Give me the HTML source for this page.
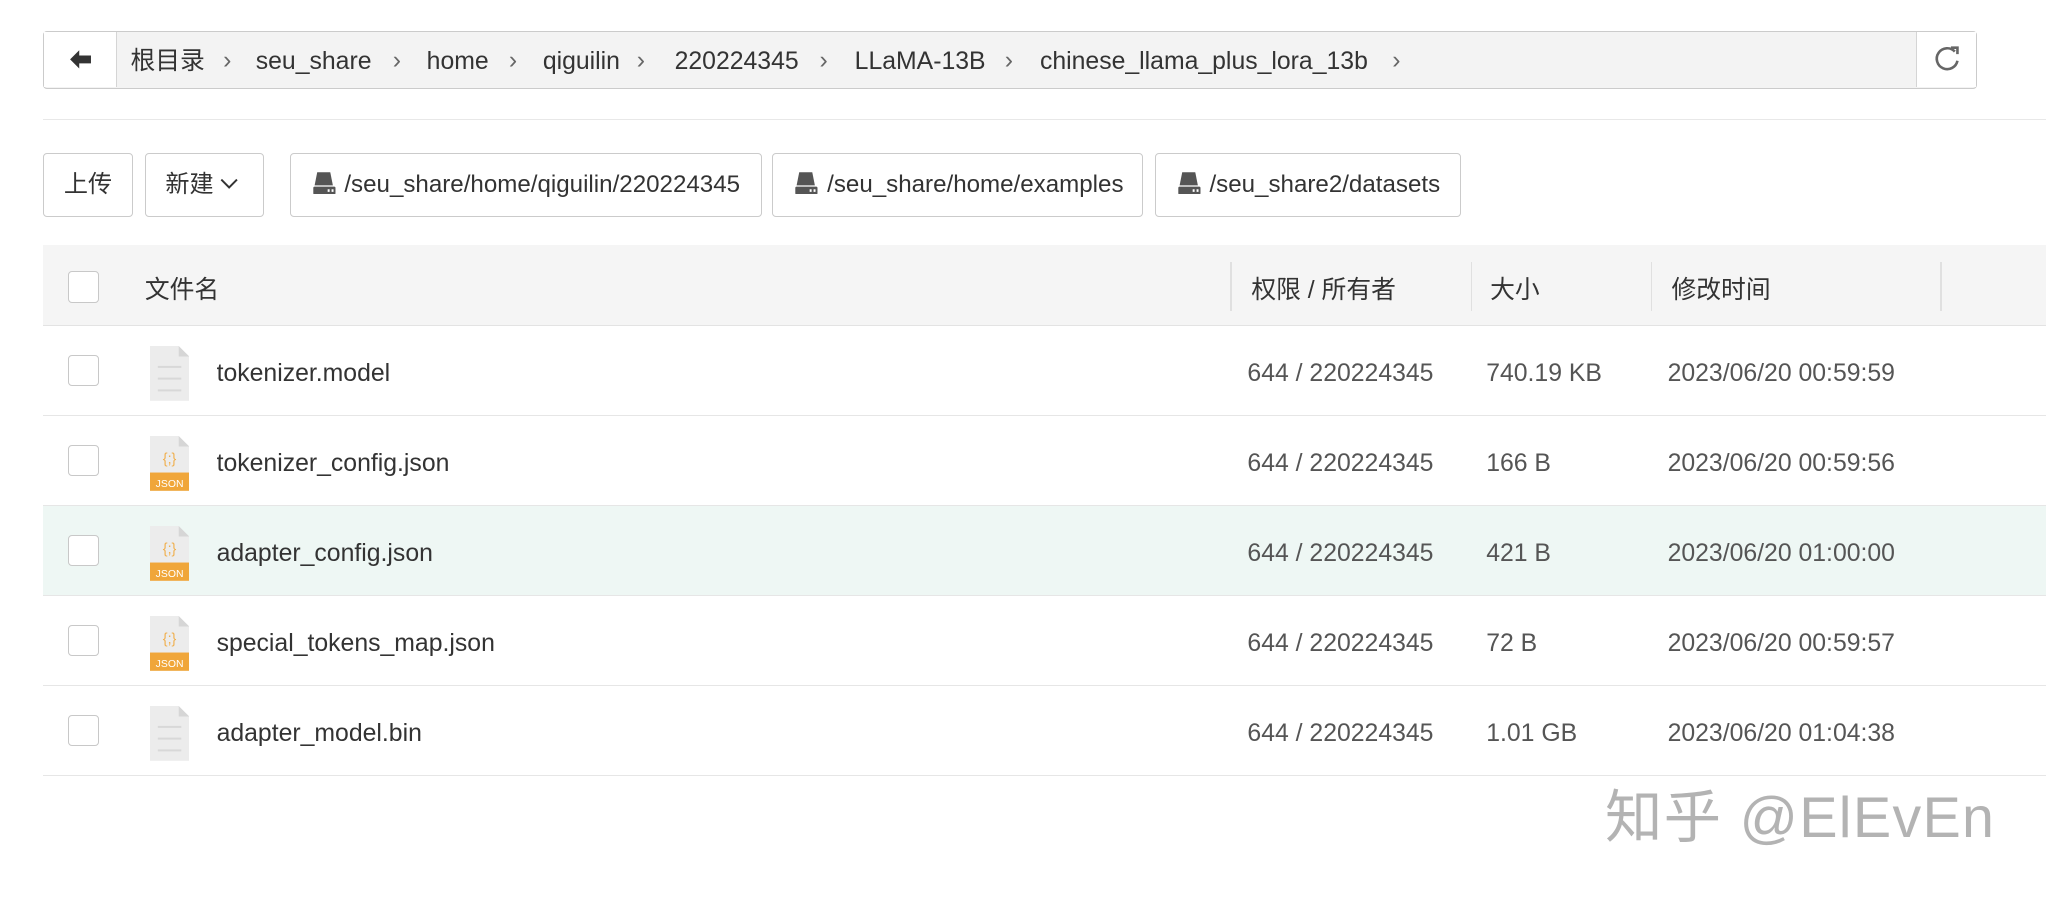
<!DOCTYPE html>
<html><head><meta charset="utf-8"><style>
*{margin:0;padding:0;box-sizing:border-box}
html,body{width:2046px;height:898px;overflow:hidden;background:#fff}
#w{zoom:1.30485;position:relative;width:1568px;height:688px;font-family:"Liberation Sans","Noto Sans CJK SC",sans-serif;color:#333;font-size:19px}
.a{position:absolute;white-space:nowrap;line-height:22px}
.bc{position:absolute;left:33px;top:24px;width:1482px;height:44px;background:#f3f3f3;border:1px solid #cbcbcb;border-radius:3px}
.btn{position:absolute;top:117px;height:49px;border:1px solid #cbcbcb;border-radius:3px;background:#fff;line-height:47px;font-size:18.5px;white-space:nowrap}
.hd{position:absolute;left:33px;top:188px;width:1535px;height:62px;background:#f5f5f5;border-bottom:1px solid #e3e3e3}
.vs{position:absolute;top:13px;width:1px;height:37px;background:#e0e0e0}
.row{position:absolute;left:33px;width:1535px;height:69px;border-bottom:1px solid #e6e6e6}
.cb{position:absolute;left:19px;top:22px;width:24px;height:24px;border:1px solid #c8c8c8;border-radius:3px;background:#fff}
.row .t{position:absolute;top:2px;line-height:69px;white-space:nowrap}
.sep{color:#666}
.g{color:#555}
</style></head><body><div id="w">
<div class="bc">
 <div class="a" style="left:0;top:0;width:56px;height:42px;background:#fff;border-right:1px solid #d5d5d5">
  <svg width="56" height="42" viewBox="0 0 56 42"><path d="M20 21 L27 14 L27 18 L36 18 L36 24 L27 24 L27 28 Z" fill="#333"/></svg></div>
 <div class="a" style="right:0;top:0;width:46px;height:42px;background:#fff;border-left:1px solid #d5d5d5">
  <svg width="46" height="42" viewBox="0 0 46 42"><path d="M29 15 A8 8 0 1 0 31 22" fill="none" stroke="#666" stroke-width="2"/><path d="M26 12 L31 12 L31 17" fill="none" stroke="#666" stroke-width="2"/></svg></div>
</div>
<div class="a" style="top:37px;left:100px">根目录</div>
<div class="a sep" style="top:36px;left:171px">›</div>
<div class="a" style="top:37px;left:196px">seu_share</div>
<div class="a sep" style="top:36px;left:301px">›</div>
<div class="a" style="top:37px;left:327px">home</div>
<div class="a sep" style="top:36px;left:390px">›</div>
<div class="a" style="top:37px;left:416px">qiguilin</div>
<div class="a sep" style="top:36px;left:488px">›</div>
<div class="a" style="top:37px;left:517px">220224345</div>
<div class="a sep" style="top:36px;left:628px">›</div>
<div class="a" style="top:37px;left:655px">LLaMA-13B</div>
<div class="a sep" style="top:36px;left:770px">›</div>
<div class="a" style="top:37px;left:797px">chinese_llama_plus_lora_13b</div>
<div class="a sep" style="top:36px;left:1067px">›</div>
<div class="a" style="left:33px;top:91px;width:1535px;height:1px;background:#e8e8e8"></div>

<div class="btn" style="left:33px;width:69px;text-align:center">上传</div>
<div class="btn" style="left:111px;width:91px;padding-left:15px">新建 <svg width="14" height="10" viewBox="0 0 14 10" style="vertical-align:1px"><path d="M1 2 L7 8 L13 2" fill="none" stroke="#333" stroke-width="1.5"/></svg></div>
<div class="btn" style="left:222px;width:362px;padding-left:16px"><svg width="20" height="18" viewBox="0 0 20 18" style="vertical-align:-2px"><path d="M4 1 H14 L16 11 H2 Z" fill="#555"/><rect x="1" y="12" width="17" height="6" rx="1" fill="#555"/><rect x="12" y="14" width="1.5" height="2" fill="#fff"/><rect x="15" y="14" width="1.5" height="2" fill="#fff"/></svg> /seu_share/home/qiguilin/220224345</div>
<div class="btn" style="left:592px;width:284px;padding-left:16px"><svg width="20" height="18" viewBox="0 0 20 18" style="vertical-align:-2px"><path d="M4 1 H14 L16 11 H2 Z" fill="#555"/><rect x="1" y="12" width="17" height="6" rx="1" fill="#555"/><rect x="12" y="14" width="1.5" height="2" fill="#fff"/><rect x="15" y="14" width="1.5" height="2" fill="#fff"/></svg> /seu_share/home/examples</div>
<div class="btn" style="left:885px;width:235px;padding-left:16px"><svg width="20" height="18" viewBox="0 0 20 18" style="vertical-align:-2px"><path d="M4 1 H14 L16 11 H2 Z" fill="#555"/><rect x="1" y="12" width="17" height="6" rx="1" fill="#555"/><rect x="12" y="14" width="1.5" height="2" fill="#fff"/><rect x="15" y="14" width="1.5" height="2" fill="#fff"/></svg> /seu_share2/datasets</div>

<div class="hd">
 <div class="cb" style="top:20px"></div>
 <div class="a" style="left:78px;top:24px">文件名</div>
 <div class="vs" style="left:910px"></div>
 <div class="a" style="left:926px;top:24px">权限 / 所有者</div>
 <div class="vs" style="left:1094px"></div>
 <div class="a" style="left:1109px;top:24px">大小</div>
 <div class="vs" style="left:1232px"></div>
 <div class="a" style="left:1248px;top:24px">修改时间</div>
 <div class="vs" style="left:1454px"></div>
</div>

<svg width="0" height="0" style="position:absolute"><defs>
<g id="doc"><path d="M0 0 H22 L30 8 V42 H0 Z" fill="#ececec"/><path d="M22 0 L30 8 H22 Z" fill="#d6d6d6"/><path d="M6 16 H24 M6 25 H24 M6 34 H24" stroke="#d8d8d8" stroke-width="1.5"/></g>
<g id="json"><path d="M0 0 H22 L30 8 V42 H0 Z" fill="#ececec"/><path d="M22 0 L30 8 H22 Z" fill="#d6d6d6"/><text x="15" y="21" font-size="11" fill="#f0b050" text-anchor="middle" font-family="Liberation Sans">{;}</text><rect x="0" y="28" width="30" height="14" fill="#f0a63a"/><text x="15" y="39" font-size="8" fill="#fff" text-anchor="middle" font-family="Liberation Sans">JSON</text></g>
</defs></svg>

<div class="row" style="top:250px"><div class="cb"></div><svg class="a" style="left:82px;top:15px" width="30" height="42"><use href="#doc"/></svg><div class="t" style="left:133px">tokenizer.model</div><div class="t g" style="left:923px">644 / 220224345</div><div class="t g" style="left:1106px">740.19 KB</div><div class="t g" style="left:1245px">2023/06/20 00:59:59</div></div>
<div class="row" style="top:319px"><div class="cb"></div><svg class="a" style="left:82px;top:15px" width="30" height="42"><use href="#json"/></svg><div class="t" style="left:133px">tokenizer_config.json</div><div class="t g" style="left:923px">644 / 220224345</div><div class="t g" style="left:1106px">166 B</div><div class="t g" style="left:1245px">2023/06/20 00:59:56</div></div>
<div class="row" style="top:388px;background:#eef7f4"><div class="cb"></div><svg class="a" style="left:82px;top:15px" width="30" height="42"><use href="#json"/></svg><div class="t" style="left:133px">adapter_config.json</div><div class="t g" style="left:923px">644 / 220224345</div><div class="t g" style="left:1106px">421 B</div><div class="t g" style="left:1245px">2023/06/20 01:00:00</div></div>
<div class="row" style="top:457px"><div class="cb"></div><svg class="a" style="left:82px;top:15px" width="30" height="42"><use href="#json"/></svg><div class="t" style="left:133px">special_tokens_map.json</div><div class="t g" style="left:923px">644 / 220224345</div><div class="t g" style="left:1106px">72 B</div><div class="t g" style="left:1245px">2023/06/20 00:59:57</div></div>
<div class="row" style="top:526px"><div class="cb"></div><svg class="a" style="left:82px;top:15px" width="30" height="42"><use href="#doc"/></svg><div class="t" style="left:133px">adapter_model.bin</div><div class="t g" style="left:923px">644 / 220224345</div><div class="t g" style="left:1106px">1.01 GB</div><div class="t g" style="left:1245px">2023/06/20 01:04:38</div></div>

<div class="a" style="left:1230px;top:602px;font-size:44px;line-height:50px;color:#b3b3b3;letter-spacing:1px">知乎 @ElEvEn</div>
</div></body></html>
